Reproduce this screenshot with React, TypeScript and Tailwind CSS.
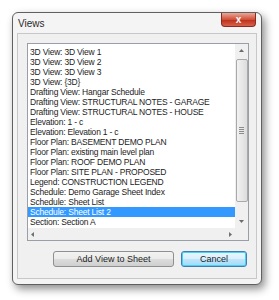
const views = [
  '3D View: 3D View 1',
  '3D View: 3D View 2',
  '3D View: 3D View 3',
  '3D View: {3D}',
  'Drafting View: Hangar Schedule',
  'Drafting View: STRUCTURAL NOTES - GARAGE',
  'Drafting View: STRUCTURAL NOTES - HOUSE',
  'Elevation: 1 - c',
  'Elevation: Elevation 1 - c',
  'Floor Plan: BASEMENT DEMO PLAN',
  'Floor Plan: existing main level plan',
  'Floor Plan: ROOF DEMO PLAN',
  'Floor Plan: SITE PLAN - PROPOSED',
  'Legend: CONSTRUCTION LEGEND',
  'Schedule: Demo Garage Sheet Index',
  'Schedule: Sheet List',
  'Schedule: Sheet List 2',
  'Section: Section A',
];

const selected = 16;

function Arrow({ dir }: { dir: 'up' | 'down' | 'left' | 'right' }) {
  const pts = {
    up: '0,4 3.5,0 7,4',
    down: '0,0 3.5,4 7,0',
    left: '4,0 0,3.5 4,7',
    right: '0,0 4,3.5 0,7',
  }[dir];
  const vertical = dir === 'up' || dir === 'down';
  return (
    <svg width={vertical ? 5 : 3} height={vertical ? 3 : 5} viewBox={vertical ? '0 0 7 4' : '0 0 4 7'}>
      <polygon points={pts} fill="#6b6b6b" />
    </svg>
  );
}

export default function App() {
  return (
    <div
      className="w-[279px] h-[300px] bg-white overflow-hidden"
      style={{ fontFamily: '"Liberation Sans", Arial, sans-serif' }}
    >
      <div className="ml-[12px] mt-[12px] w-[250px] h-[273px] rounded-[6px] border border-[#606060] bg-[#f4f4f4] shadow-[3px_4px_8px_rgba(0,0,0,0.45)] flex flex-col">
        {/* title bar */}
        <div className="h-[20px] flex items-start justify-between pl-[5px] pr-[5px]">
          <span className="text-[10px] text-[#2a2a2a] mt-[6px] leading-none">Views</span>
          <div className="w-[35px] h-[14px] rounded-b-[4px] border border-t-0 border-[#8a2a22] bg-[linear-gradient(#eaa898,#d05038_50%,#bd321f_55%,#d86048)] flex items-center justify-center">
            <span className="text-[10px] font-bold text-white leading-none">x</span>
          </div>
        </div>

        {/* client area */}
        <div className="flex-1 mx-[4px] mb-[5px] border border-[#c8c8c8] bg-[#f0f0f0] flex flex-col pl-[9px] pr-[7px] pt-[9px]">
          {/* list box */}
          <div className="w-[222px] h-[198px] border border-[#9a9ea6] bg-white flex flex-col">
            <div className="flex flex-1 min-h-0">
              <div className="flex-1 pt-[3px] text-[8.5px] tracking-[-0.2px] text-[#1c1c1c] leading-[10px] overflow-hidden">
                {views.map((v, i) => (
                  <div
                    key={v}
                    className={
                      i === selected
                        ? 'h-[10px] pl-[2px] whitespace-nowrap bg-[#3399ff] text-white'
                        : 'h-[10px] pl-[2px] whitespace-nowrap'
                    }
                  >
                    {v}
                  </div>
                ))}
              </div>
              {/* vertical scrollbar */}
              <div className="w-[13px] bg-[#f0f0f0] flex flex-col items-center">
                <div className="h-[13px] flex items-center justify-center">
                  <Arrow dir="up" />
                </div>
                <div className="w-[12px] h-[143px] mt-[2px] rounded-[2px] border border-[#a9a9a9] bg-[linear-gradient(90deg,#f2f2f2,#dcdcdc)] flex flex-col items-center justify-center gap-[1px]">
                  <div className="w-[5px] h-px bg-[#8c8c8c]" />
                  <div className="w-[5px] h-px bg-[#8c8c8c]" />
                  <div className="w-[5px] h-px bg-[#8c8c8c]" />
                  <div className="w-[5px] h-px bg-[#8c8c8c]" />
                </div>
                <div className="flex-1" />
                <div className="h-[13px] flex items-center justify-center">
                  <Arrow dir="down" />
                </div>
              </div>
            </div>
            {/* horizontal scrollbar */}
            <div className="h-[12px] flex">
              <div className="flex-1 bg-[#f0f0f0] flex items-center justify-between px-[3px]">
                <Arrow dir="left" />
                <Arrow dir="right" />
              </div>
              <div className="w-[13px] bg-[#f0f0f0]" />
            </div>
          </div>

          {/* buttons */}
          <div className="mt-[10px] flex justify-end gap-[7px] pr-[2px]">
            <button className="w-[121px] h-[16px] rounded-[3px] border border-[#8e8f8f] bg-[linear-gradient(#f2f2f2,#ebebeb_50%,#dddddd_50%,#cfcfcf)] text-[9px] text-[#1c1c1c] leading-none">
              Add View to Sheet
            </button>
            <button className="w-[66px] h-[16px] rounded-[3px] border border-[#3c7fb1] bg-[linear-gradient(#eaf6fd,#d9f0fc_50%,#bee6fd_50%,#a7d9f5)] shadow-[inset_0_0_0_1px_#48d0f8] text-[9px] text-[#1c1c1c] leading-none">
              Cancel
            </button>
          </div>
        </div>
      </div>
    </div>
  );
}
